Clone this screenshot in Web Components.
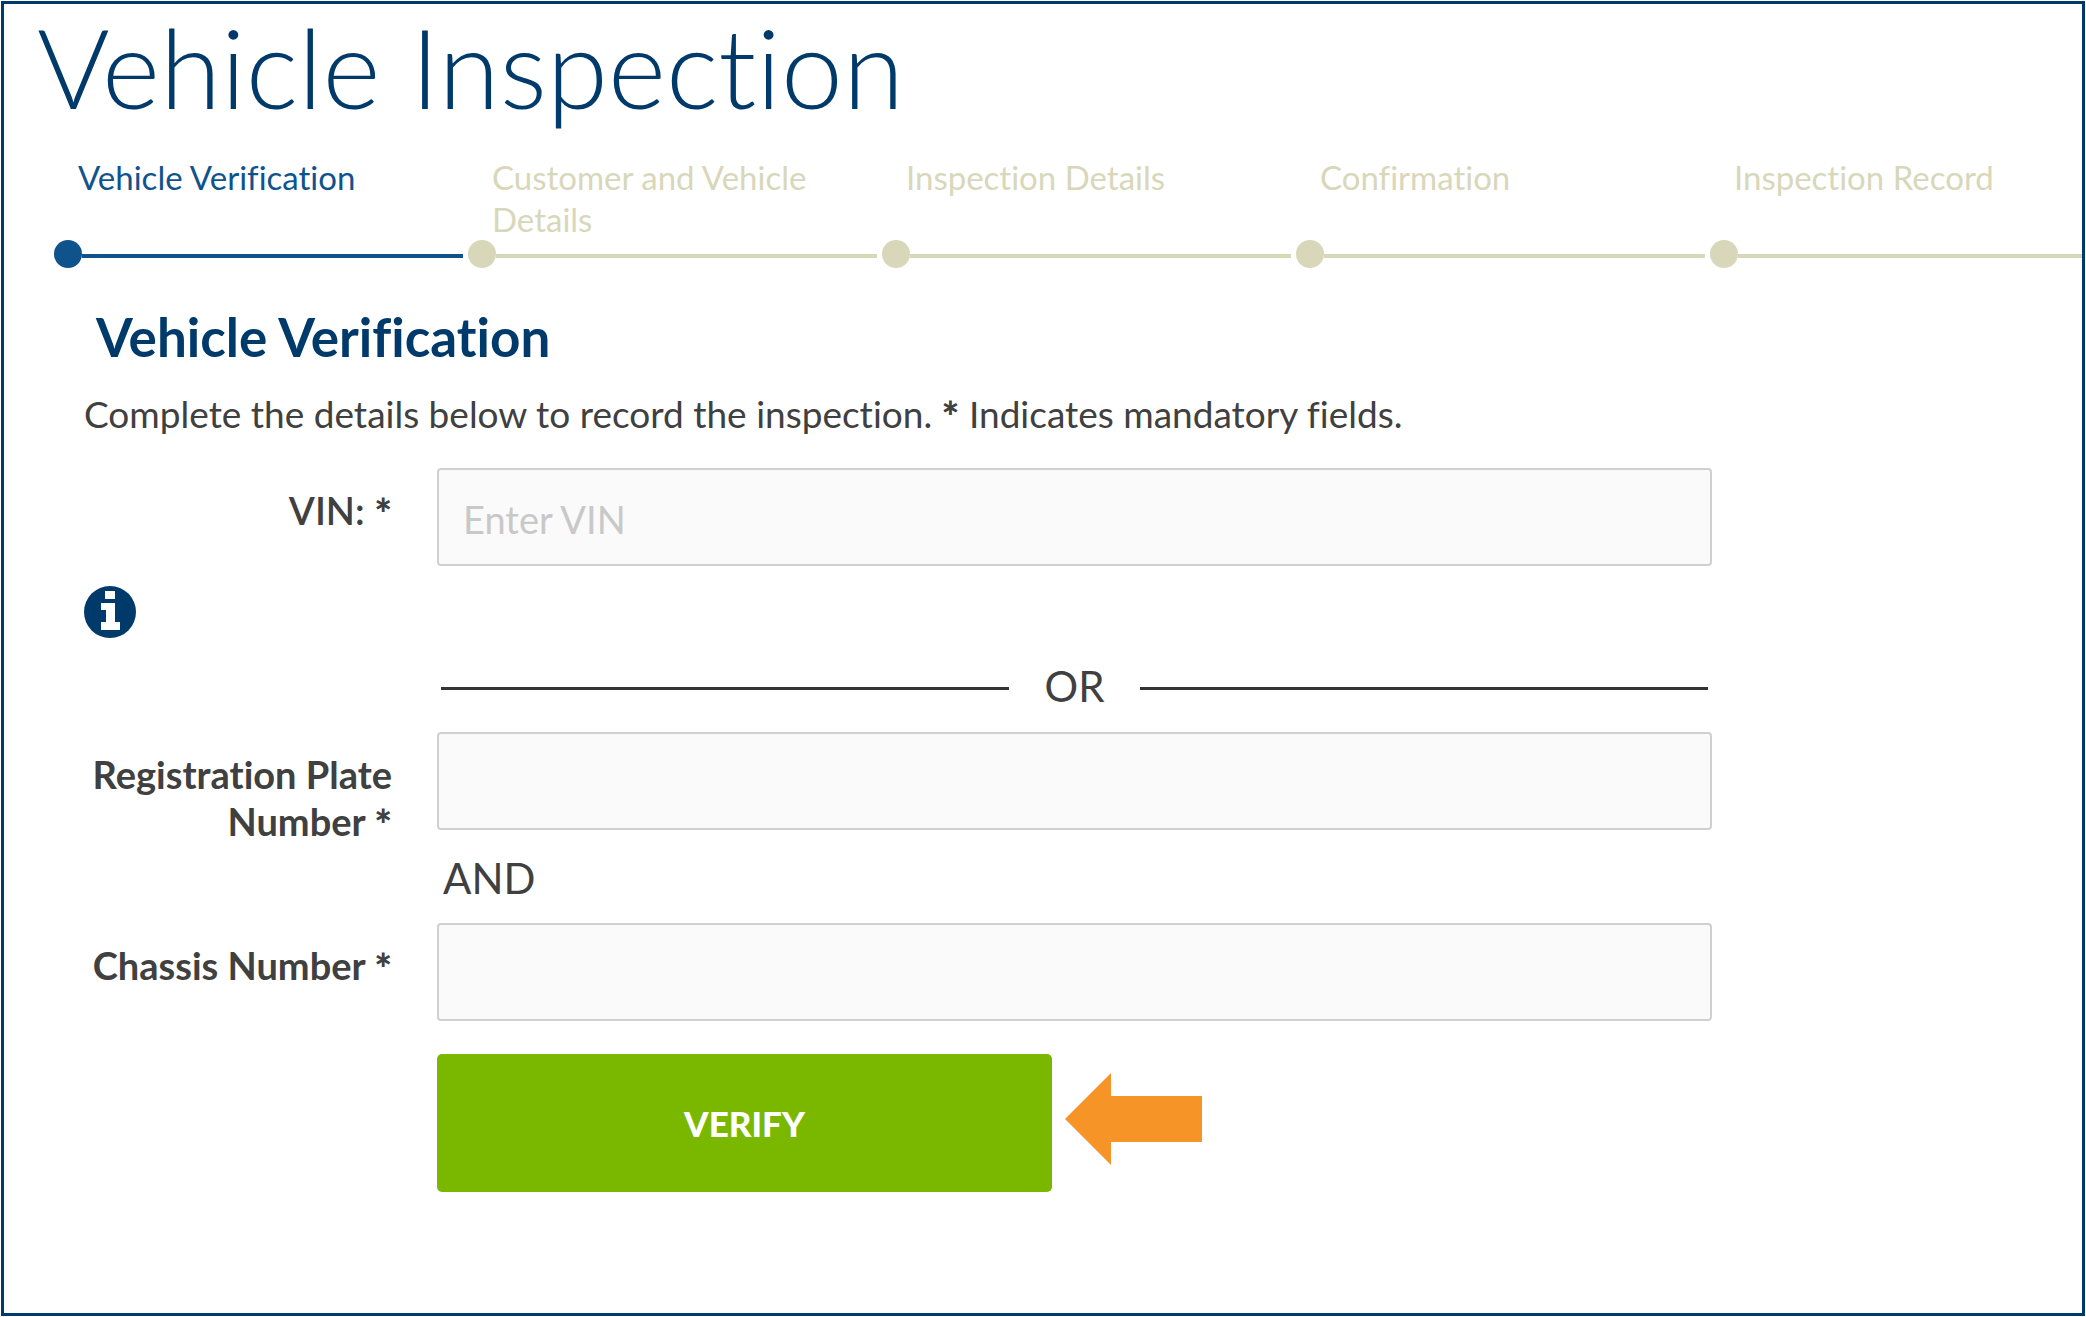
<!DOCTYPE html>
<html lang="en">
<head>
<meta charset="utf-8">
<title>Vehicle Inspection</title>
<style>
  html, body { height: 100%; }
  body {
    margin: 0;
    background: #fff;
    color: #404040;
    font-family: Lato, "Liberation Sans", sans-serif;
    font-size: 37px;
    line-height: 48px;
    font-variant-ligatures: none;
    --navy: #003a6b;
    --blue: #10538c;
    --sand: #d8d7ba;
    --ink: #404040;
  }
</style>
</head>
<body>
<inspection-page>
  <span slot="title">Vehicle Inspection</span>
  <step-list slot="steps">
    <progress-step current>Vehicle Verification</progress-step>
    <progress-step>Customer and Vehicle Details</progress-step>
    <progress-step>Inspection Details</progress-step>
    <progress-step>Confirmation</progress-step>
    <progress-step last>Inspection Record</progress-step>
  </step-list>
  <verification-form></verification-form>
</inspection-page>

<script>
  class BaseElement extends HTMLElement {
    constructor() {
      super();
      this.attachShadow({ mode: 'open' }).innerHTML =
        '<style>*{box-sizing:border-box}</style>' + this.render();
    }
    render() { return '<slot></slot>'; }
  }

  customElements.define('inspection-page', class extends BaseElement {
    render() {
      return `
        <style>
          :host { display: block; box-sizing: border-box; min-height: 100%; padding: 1px; }
          main { display: flow-root; min-height: calc(100vh - 2px); border: 3px solid var(--navy); overflow: hidden; }
          h1 { margin: 0 0 0 33px; font-size: 111px; line-height: 124px; font-weight: 300; color: var(--navy); }
        </style>
        <main>
          <h1><slot name="title"></slot></h1>
          <slot name="steps"></slot>
          <slot></slot>
        </main>`;
    }
  });

  customElements.define('step-list', class extends BaseElement {
    render() {
      return `
        <style>
          :host { display: block; margin-top: 28px; padding-left: 50px; }
          div { display: grid; grid-template-columns: repeat(4, 414fr) 372fr; }
        </style>
        <div role="list"><slot></slot></div>`;
    }
  });

  customElements.define('progress-step', class extends BaseElement {
    connectedCallback() { this.setAttribute('role', 'listitem'); }
    render() {
      return `
        <style>
          :host { display: flex; flex-direction: column; color: var(--sand); --mark: var(--sand); }
          :host([current]) { color: var(--blue); --mark: var(--blue); }
          .label { min-height: 84px; padding: 0 24px; font-size: 33px; line-height: 42px; }
          .track { display: flex; align-items: center; padding-right: 5px; }
          :host([last]) .track { padding-right: 0; }
          .dot { width: 28px; height: 28px; border-radius: 50%; background: var(--mark); }
          .line { flex: 1; height: 4px; margin-top: 4px; background: var(--mark); }
        </style>
        <div class="label"><slot></slot></div>
        <div class="track"><span class="dot"></span><span class="line"></span></div>`;
    }
  });

  customElements.define('required-mark', class extends BaseElement {
    render() {
      return `
        <style>:host { font-size: 42px; font-weight: 900; line-height: 0; vertical-align: -4px; }</style>
        <slot></slot>`;
    }
  });

  customElements.define('form-field', class extends BaseElement {
    render() {
      return `
        <style>
          :host { display: grid; grid-template-columns: 308px minmax(0, 1275px); column-gap: 45px; align-items: start; font-size: 38px; }
          label { padding-top: 19px; text-align: right; font-weight: 700; line-height: 47px; }
          :host([light]) label { font-weight: 600; }
          input { width: 100%; height: 98px; margin: 0; padding: 4px 24px 0; border: 2px solid #d0d0d0; border-radius: 4px;
                  background: #fafafa; color: var(--ink); font: inherit; }
          input::placeholder { color: #c8c8c8; opacity: 1; }
        </style>
        <label for="field"><slot></slot></label>
        <input id="field" type="text">`;
    }
    connectedCallback() {
      this.shadowRoot.querySelector('input').placeholder = this.getAttribute('placeholder') || '';
    }
  });

  customElements.define('info-button', class extends BaseElement {
    render() {
      return `
        <style>
          :host { display: block; }
          button { display: block; width: 52px; height: 52px; margin: 0; padding: 0; border: 0; background: none; }
          svg { display: block; }
        </style>
        <button type="button" aria-label="Information">
          <svg width="52" height="52" viewBox="0 0 52 52">
            <circle cx="26" cy="26" r="26" fill="var(--navy)"/>
            <path fill="#fff" d="M21 5h10v8H21zM17 17h14v19h5v8H17v-8h5V24h-5z"/>
          </svg>
        </button>`;
    }
  });

  customElements.define('or-divider', class extends BaseElement {
    render() {
      return `
        <style>
          :host { display: flex; align-items: center; max-width: 1275px; padding: 0 4px; box-sizing: border-box; font-size: 42px; line-height: 56px; }
          i { flex: 1; height: 3px; margin-top: 4px; background: #333; }
          span { width: 131px; text-align: center; }
        </style>
        <i></i><span><slot></slot></span><i></i>`;
    }
  });

  customElements.define('pointer-arrow', class extends BaseElement {
    render() {
      return `
        <style>:host { display: block; } svg { display: block; }</style>
        <svg width="137" height="92" viewBox="0 0 137 92" aria-hidden="true">
          <path fill="#f79428" d="M0 46 46 0v23h91v46H46v23z"/>
        </svg>`;
    }
  });

  customElements.define('verification-form', class extends BaseElement {
    render() {
      return `
        <style>
          :host { display: block; padding: 35px 40px 0 80px; }
          h2 { margin: 0 0 0 12px; font-size: 53px; line-height: 68px; font-weight: 700; color: var(--navy); }
          p { margin: 19px 0 30px; }
          info-button { margin-top: 20px; }
          or-divider { margin: 20px 0 18px 353px; }
          .and { margin: 5px 0 17px 359px; font-size: 42px; line-height: 56px; }
          .actions { display: flex; align-items: center; gap: 13px; margin: 33px 0 0 353px; }
          .verify { width: 615px; height: 138px; padding: 0; border: 0; border-radius: 5px; background: #7ab800;
                    color: #fff; font: inherit; font-size: 35px; font-weight: 900; }
          pointer-arrow { margin-bottom: 8px; }
        </style>
        <form>
          <h2>Vehicle Verification</h2>
          <p>Complete the details below to record the inspection. <required-mark>*</required-mark> Indicates mandatory fields.</p>
          <form-field light placeholder="Enter VIN">VIN: <required-mark>*</required-mark></form-field>
          <info-button></info-button>
          <or-divider>OR</or-divider>
          <form-field>Registration Plate Number <required-mark>*</required-mark></form-field>
          <div class="and">AND</div>
          <form-field>Chassis Number <required-mark>*</required-mark></form-field>
          <div class="actions">
            <button class="verify" type="button">VERIFY</button>
            <pointer-arrow></pointer-arrow>
          </div>
        </form>`;
    }
  });
</script>
</body>
</html>
